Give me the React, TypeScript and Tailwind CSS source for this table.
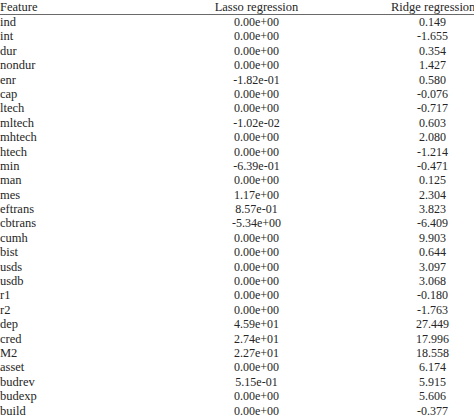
const rows: [string, string, string][] = [
  ['ind', '0.00e+00', '0.149'],
  ['int', '0.00e+00', '-1.655'],
  ['dur', '0.00e+00', '0.354'],
  ['nondur', '0.00e+00', '1.427'],
  ['enr', '-1.82e-01', '0.580'],
  ['cap', '0.00e+00', '-0.076'],
  ['ltech', '0.00e+00', '-0.717'],
  ['mltech', '-1.02e-02', '0.603'],
  ['mhtech', '0.00e+00', '2.080'],
  ['htech', '0.00e+00', '-1.214'],
  ['min', '-6.39e-01', '-0.471'],
  ['man', '0.00e+00', '0.125'],
  ['mes', '1.17e+00', '2.304'],
  ['eftrans', '8.57e-01', '3.823'],
  ['cbtrans', '-5.34e+00', '-6.409'],
  ['cumh', '0.00e+00', '9.903'],
  ['bist', '0.00e+00', '0.644'],
  ['usds', '0.00e+00', '3.097'],
  ['usdb', '0.00e+00', '3.068'],
  ['r1', '0.00e+00', '-0.180'],
  ['r2', '0.00e+00', '-1.763'],
  ['dep', '4.59e+01', '27.449'],
  ['cred', '2.74e+01', '17.996'],
  ['M2', '2.27e+01', '18.558'],
  ['asset', '0.00e+00', '6.174'],
  ['budrev', '5.15e-01', '5.915'],
  ['budexp', '0.00e+00', '5.606'],
  ['build', '0.00e+00', '-0.377'],
];

export default function App() {
  return (
    <div
      className="w-[474px] h-[418px] overflow-hidden bg-white text-[#262626] text-[12px]"
      style={{ fontFamily: '"Liberation Serif", "DejaVu Serif", serif' }}
    >
      {/* header */}
      <div className="grid grid-cols-[122px_269px_83px] h-[15px] leading-[14px] border-b border-[#6a6a6a] whitespace-nowrap text-[12.5px]">
        <div>Feature</div>
        <div className="text-center">Lasso regression</div>
        <div className="text-center">Ridge regression</div>
      </div>
      {rows.map(([name, lasso, ridge]) => (
        <div
          key={name}
          className="grid grid-cols-[122px_269px_83px] h-[14.4px] leading-[14.4px] whitespace-nowrap"
        >
          <div className="text-[12.5px]">{name}</div>
          <div className="text-center">{lasso}</div>
          <div className="text-center">{ridge}</div>
        </div>
      ))}
    </div>
  );
}
